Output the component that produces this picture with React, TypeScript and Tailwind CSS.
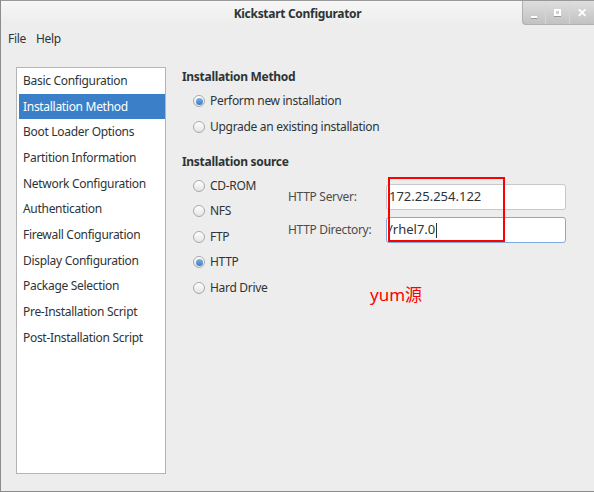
import React from 'react'

const sections = [
  'Basic Configuration',
  'Installation Method',
  'Boot Loader Options',
  'Partition Information',
  'Network Configuration',
  'Authentication',
  'Firewall Configuration',
  'Display Configuration',
  'Package Selection',
  'Pre-Installation Script',
  'Post-Installation Script',
]

const sources = ['CD-ROM', 'NFS', 'FTP', 'HTTP', 'Hard Drive']

function Radio({ checked }: { checked?: boolean }) {
  return (
    <span className="flex h-[12px] w-[12px] shrink-0 items-center justify-center rounded-full border border-[#a9a9a9] bg-gradient-to-b from-white to-[#e4e4e4]">
      {checked && <span className="h-[7px] w-[7px] rounded-full bg-gradient-to-b from-[#7fb0e6] to-[#3a7cc8]" />}
    </span>
  )
}

export default function App() {
  return (
    <div
      className="relative flex h-[492px] w-[594px] flex-col border-b border-l border-[#8c8c8c] bg-[#ededed] text-[12px] tracking-[-0.3px] text-[#2e3436]"
      style={{ fontFamily: '"Noto Sans", sans-serif' }}
    >
      {/* Title bar */}
      <div className="relative flex h-[26px] shrink-0 items-center justify-center border-t border-[#9a9a9a] bg-gradient-to-b from-[#f7f7f7] to-[#ececec]">
        <span className="font-bold text-[#2e3436]">Kickstart Configurator</span>
        <div className="absolute right-0 top-0 flex h-[24px] overflow-hidden rounded-bl-[4px] border-b border-l border-[#b0b0b0] bg-gradient-to-b from-[#dedede] to-[#c2c2c2] text-white">
          <div className="flex w-[23px] items-end justify-center border-r border-[#d6d6d6] pb-[6px]">
            <span className="h-[2px] w-[6px] bg-white shadow-[0_1px_0_#9a9a9a]" />
          </div>
          <div className="flex w-[24px] items-center justify-center border-r border-[#d6d6d6]">
            <span className="h-[7px] w-[7px] border-2 border-white shadow-[0_1px_0_#9a9a9a]" />
          </div>
          <div className="flex w-[24px] items-center justify-center text-[12px] font-bold">✕</div>
        </div>
      </div>

      {/* Menu bar */}
      <div className="flex h-[26px] shrink-0 items-center gap-[10px] px-[7px]">
        <span>File</span>
        <span>Help</span>
      </div>

      <div className="flex flex-1 pt-[15px]">
        {/* Section list */}
        <div className="ml-[15px] h-[407px] w-[150px] border border-[#b4b4b4] bg-white pl-[2px]">
          {sections.map((s) => (
            <div
              key={s}
              className={`flex h-[25.7px] items-center pl-[4px] ${
                s === 'Installation Method' ? 'bg-[#3b7fc9] text-white' : ''
              }`}
            >
              {s}
            </div>
          ))}
        </div>

        {/* Installation panel */}
        <div className="ml-[16px] flex-1 pt-[1px]">
          <div className="h-[18px] font-bold leading-[18px]">Installation Method</div>
          <div className="mt-[2px] pl-[11px]">
            <div className="flex h-[26px] items-center gap-[5px]">
              <Radio checked />
              <span>Perform new installation</span>
            </div>
            <div className="flex h-[26px] items-center gap-[5px]">
              <Radio />
              <span>Upgrade an existing installation</span>
            </div>
          </div>

          <div className="mt-[13px] h-[18px] font-bold leading-[18px]">Installation source</div>
          <div className="mt-[2px] flex">
            <div className="w-[106px] pl-[11px]">
              {sources.map((s) => (
                <div key={s} className="flex h-[25.5px] items-center gap-[5px]">
                  <Radio checked={s === 'HTTP'} />
                  <span>{s}</span>
                </div>
              ))}
            </div>
            <div className="mt-[11px] flex flex-col gap-[7px]">
              <div className="flex items-center">
                <span className="w-[98px] text-[#4c4c4c]">HTTP Server:</span>
                <div className="flex h-[26px] w-[180px] items-center rounded-[3px] border border-[#c8c8c8] bg-white pl-[2px] text-[13px] tracking-normal">
                  172.25.254.122
                </div>
              </div>
              <div className="flex items-center">
                <span className="w-[98px] text-[#4c4c4c]">HTTP Directory:</span>
                <div className="flex h-[26px] w-[180px] items-center overflow-hidden rounded-[3px] border border-[#7eaadc] bg-white pl-[1px] text-[13px] tracking-normal">
                  <span>/rhel7.0</span>
                  <span className="ml-[1px] h-[15px] w-px bg-[#2e3436]" />
                </div>
              </div>
            </div>
          </div>
        </div>
      </div>

      {/* Annotation */}
      <div className="pointer-events-none absolute left-[387px] top-[177px] h-[65px] w-[117px] border-2 border-[#ff0000]" />
      <div
        className="absolute left-[369px] top-[282px] text-[17px] tracking-normal text-[#ff0000]"
        style={{ fontFamily: '"Noto Sans", "Noto Sans CJK SC", sans-serif' }}
      >
        yum源
      </div>
    </div>
  )
}
